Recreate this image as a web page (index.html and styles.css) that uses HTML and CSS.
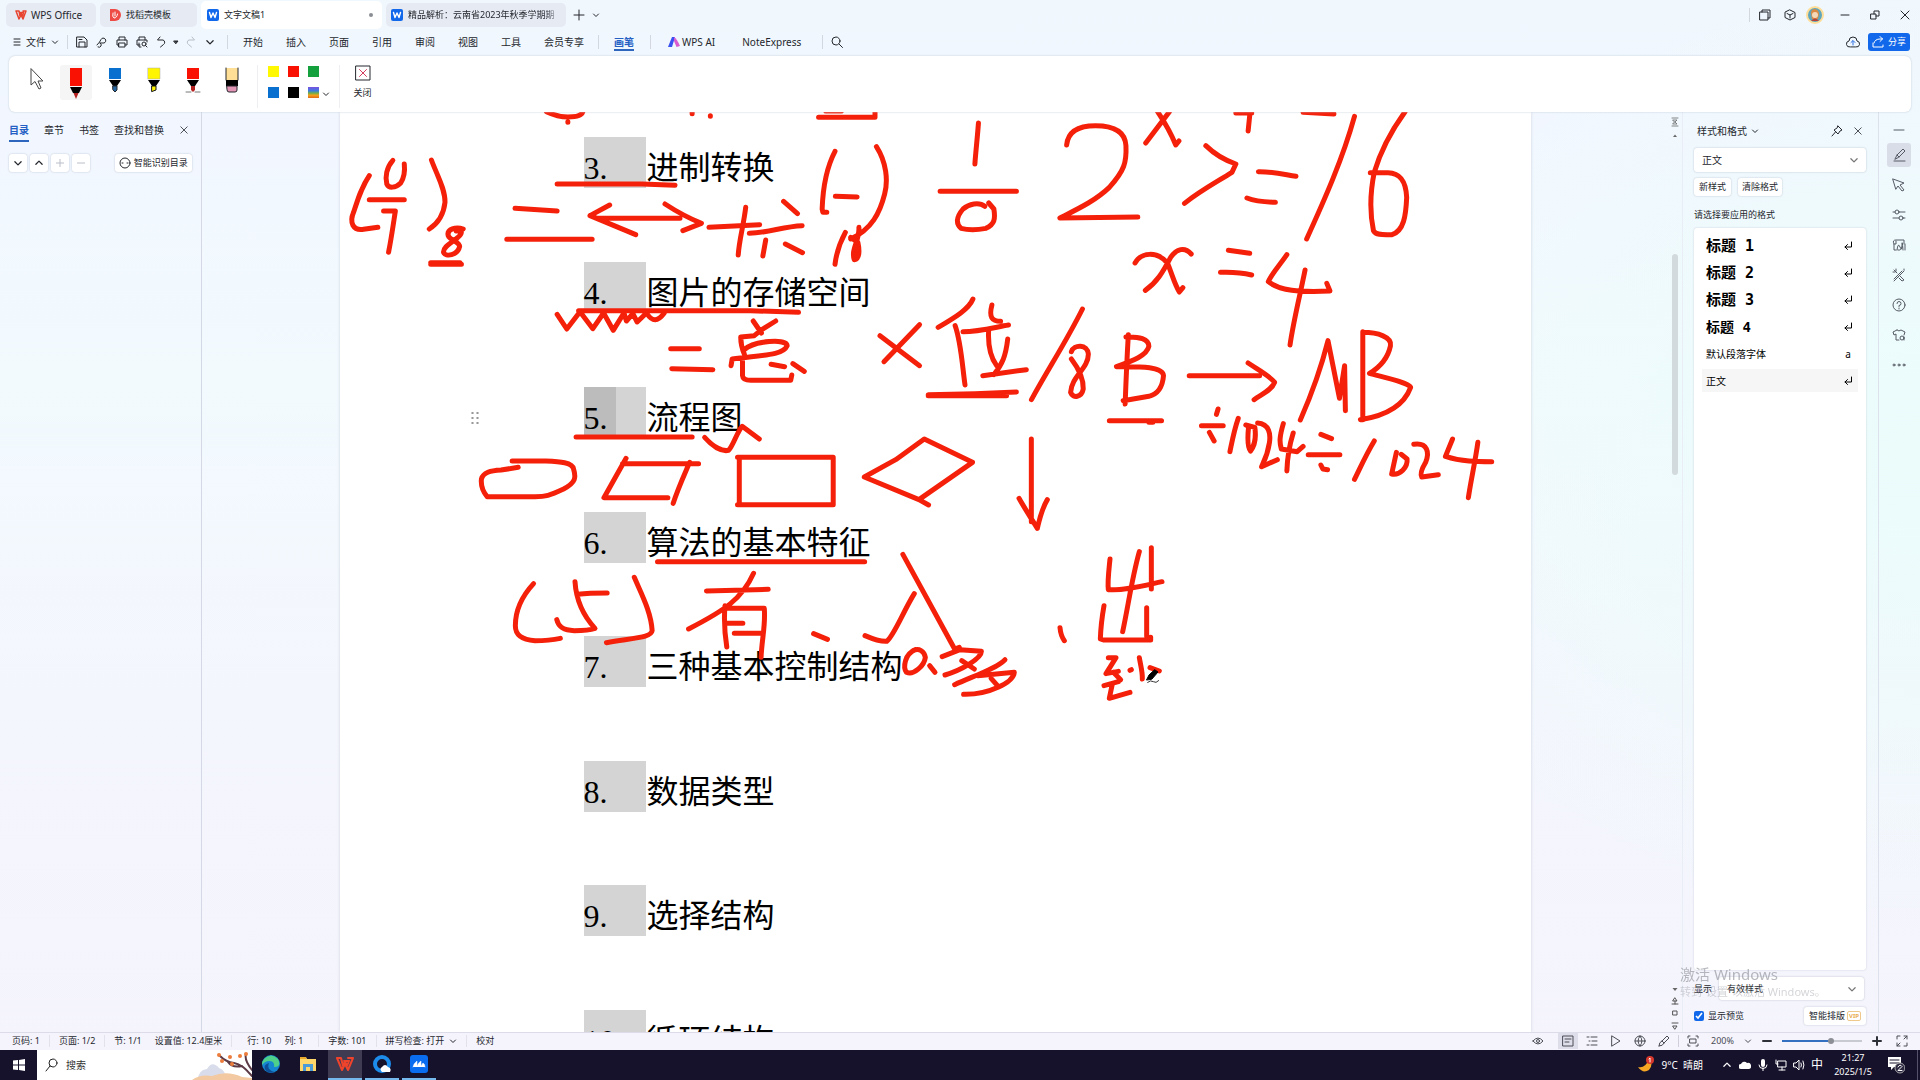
FILE: index.html
```html
<!DOCTYPE html>
<html lang="zh-CN">
<head>
<meta charset="utf-8">
<title>文字文稿1 - WPS Office</title>
<link rel="stylesheet" href="styles.css">
</head>
<body>
<svg class="defs" aria-hidden="true">
  <symbol id="chev" viewBox="0 0 8 8"><path d="M1.500 3 4 5.500 6.500 3"/></symbol>
  <symbol id="close" viewBox="0 0 10 10"><path d="M1 1 9 9M9 1 1 9"/></symbol>
  <symbol id="ret" viewBox="0 0 10 10"><path d="M8.500 1V6H2M4.500 3.500 2 6 4.500 8.500"/></symbol>
</svg>

<header class="titlebar">
  <nav class="tabs">
    <a class="tab home" href="#"><svg class="i12" viewBox="0 0 12 12"><path d="M1 2H4L5 7 6 4 7.500 7 8.500 3.500H5.500M8 2H11L8 10 6 6 4 10 1 2" stroke="#e8432e" stroke-width="1.500"/></svg><span class="t10">WPS Office</span></a>
    <a class="tab docer" href="#"><svg class="i12" viewBox="0 0 12 12"><path d="M1 0H6A6 6 0 0 1 6 12H1Z" fill="#ee4b46" stroke="none"/><path d="M4 4Q3 8 5 9 8 9 8.500 5M6 7V3" stroke="#fff"/></svg>找稻壳模板</a>
    <a class="tab active" href="#"><svg class="i12" viewBox="0 0 12 12"><rect width="12" height="12" rx="2" fill="#1268ea" stroke="none"/><path d="M2.500 3.500 4 8.500 6 4 8 8.500 9.500 3.500" stroke="#fff" stroke-width="1.400"/></svg>文字文稿1<i class="dot"></i></a>
    <a class="tab last" href="#"><svg class="i12" viewBox="0 0 12 12"><rect width="12" height="12" rx="2" fill="#1268ea" stroke="none"/><path d="M2.500 3.500 4 8.500 6 4 8 8.500 9.500 3.500" stroke="#fff" stroke-width="1.400"/></svg><span class="fade">精品解析：云南省2023年秋季学期期</span></a>
    <button class="ib plus" aria-label="新建"><svg class="i12" viewBox="0 0 12 12"><path d="M6 1V11M1 6H11"/></svg></button>
    <button class="ib" aria-label="更多标签"><svg class="i8"><use href="#chev"/></svg></button>
  </nav>
  <div class="wincontrols">
    <i class="sep"></i>
    <button class="ib" aria-label="窗口"><svg class="i12" viewBox="0 0 12 12"><path d="M1 3H9V11H1ZM3 3V1H11V9H9"/></svg></button>
    <button class="ib" aria-label="应用"><svg class="i12" viewBox="0 0 12 12"><path d="M6 1 11 3.500V8.500L6 11 1 8.500V3.500ZM3 4.500 6 6 9 4.500M6 6V9"/></svg></button>
    <button class="ib" aria-label="账号"><svg class="avatar" viewBox="0 0 18 18"><circle cx="9" cy="9" r="8" fill="#5fa6bd" stroke="#ffdf9a" stroke-width="2"/><path d="M5 7Q5 3 9 3 13 4 13 8L12 13H6Z" fill="#d98a45" stroke="none"/><circle cx="9" cy="9" r="3" fill="#f4d8b8" stroke="none"/><path d="M5 15Q9 10 13 15" fill="#b5423c" stroke="none"/></svg></button>
    <button class="ib wide" aria-label="最小化"><svg class="i10" viewBox="0 0 10 10"><path d="M1 5H9"/></svg></button>
    <button class="ib wide" aria-label="还原"><svg class="i10" viewBox="0 0 10 10"><path d="M1 4H6V9H1ZM4 4V1H9V6H6"/></svg></button>
    <button class="ib wide" aria-label="关闭"><svg class="i10"><use href="#close"/></svg></button>
  </div>
</header>

<nav class="menubar">
  <button class="file"><svg class="i8" viewBox="0 0 8 8"><path d="M1 1H7M1 4H7M1 7H7"/></svg>文件<svg class="i8"><use href="#chev"/></svg></button>
  <i class="sep"></i>
  <div class="quick">
    <button class="ib" aria-label="保存"><svg class="i12" viewBox="0 0 12 12"><path d="M1 1H8L11 4V11H1ZM3 11V6H9V11M3 3.500H6"/></svg></button>
    <button class="ib" aria-label="导出"><svg class="i12" viewBox="0 0 12 12"><path d="M1 9Q4 6 5 3.500A2.500 2.500 0 1 1 8 7L4 7M4 7A2 2 0 1 1 2 11"/></svg></button>
    <button class="ib" aria-label="打印"><svg class="i12" viewBox="0 0 12 12"><path d="M3 4V1H9V4M3 9H1V4H11V9H9M3 7H9V11H3Z"/></svg></button>
    <button class="ib" aria-label="打印预览"><svg class="i12" viewBox="0 0 12 12"><path d="M3 4V1H9V4M4 9H1V4H11V6M3 7V11H5M11 11 9.500 9.500"/><circle cx="8" cy="8" r="2"/></svg></button>
    <button class="ib" aria-label="撤销"><svg class="i12" viewBox="0 0 12 12"><path d="M4 1 1.500 4H7A2.500 2.500 0 0 1 7.500 8.500L4.500 11"/></svg></button>
    <button class="ib slim" aria-label="撤销列表"><svg class="i8" viewBox="0 0 8 8"><path d="M2 3H6L4 5.500Z" fill="#333"/></svg></button>
    <button class="ib off" aria-label="恢复"><svg class="i12" viewBox="0 0 12 12"><path d="M8 1 10.500 4H5A2.500 2.500 0 0 0 4.500 8.500L7.500 11"/></svg></button>
    <button class="ib" aria-label="自定义"><svg class="i10"><use href="#chev"/></svg></button>
  </div>
  <i class="sep"></i>
  <div class="menus"><a href="#">开始</a><a href="#">插入</a><a href="#">页面</a><a href="#">引用</a><a href="#">审阅</a><a href="#">视图</a><a href="#">工具</a><a href="#">会员专享</a></div>
  <i class="sep"></i>
  <a class="pen" href="#">画笔</a>
  <i class="sep"></i>
  <a class="ai" href="#"><svg class="i12" viewBox="0 0 12 12"><path d="M4 1H7L4 11H0Z" fill="#3a50f0" stroke="none"/><path d="M6 1Q9 3 12 10L8.500 11 6 5Z" fill="#d85bd0" stroke="none"/></svg>WPS AI</a>
  <a class="note" href="#">NoteExpress</a>
  <i class="sep"></i>
  <button class="ib search" aria-label="搜索"><svg class="i12" viewBox="0 0 12 12"><circle cx="5" cy="5" r="4"/><path d="M8 8 11.500 11.500"/></svg></button>
  <div class="right">
    <button class="ib" aria-label="云同步"><svg class="i14" viewBox="0 0 14 14"><path d="M4 12A3 3 0 0 1 3 6 4 4 0 0 1 11 6 3 3 0 0 1 10 12Z"/><path d="M7 10V6M5 7.500 7 5.500 9 7.500" stroke="#2f6fe0"/></svg></button>
    <button class="share"><svg class="i12" viewBox="0 0 12 12"><path d="M1 7V11H11V9M2 7Q3 3 8 3H10.500M8 .5 10.500 3 8 5.500"/></svg>分享</button>
  </div>
</nav>

<section class="ribbon">
  <div class="group pens">
    <button aria-label="选择"><svg viewBox="0 0 32 34"><path d="M10 3V19L14 15.500 18 23 20 22 17 15H21.500Z" fill="#fff" stroke="#444"/></svg></button>
    <button class="on" aria-label="红色笔"><svg viewBox="0 0 32 34"><path d="M10 2H22V20H10Z" fill="#f91103" stroke="none"/><path d="M10 21H22L19 27H13Z" fill="#000" stroke="none"/><path d="M13.500 27H18.500L16 33Z" fill="#b32020" stroke="none"/></svg></button>
    <button aria-label="蓝色笔"><svg viewBox="0 0 32 34"><path d="M10 2H22V13H10Z" fill="#0a70d0" stroke="none"/><path d="M10 14H22L18 20H14Z" fill="#000" stroke="none"/><path d="M14 20H18V24L16 26 14 24Z" fill="#24639c"/></svg></button>
    <button aria-label="荧光笔"><svg viewBox="0 0 32 34"><path d="M10 2H22V13H10Z" fill="#fff500" stroke="#aaa" stroke-width=".5"/><path d="M10 14H22L18 20H14Z" fill="#000" stroke="none"/><path d="M14 20H18V24L14 25.500Z" fill="#fff500" stroke="#111"/></svg></button>
    <button aria-label="下划线笔"><svg viewBox="0 0 32 34"><path d="M10 2H22V13H10Z" fill="#f91103" stroke="none"/><path d="M10 14H22L18 20H14Z" fill="#000" stroke="none"/><path d="M14 20H18V24L16 26 14 24Z" fill="#b32020" stroke="none"/><path d="M9 26H14M18 26H23" stroke="#777"/></svg></button>
    <button aria-label="橡皮擦"><svg viewBox="0 0 32 34"><path d="M10 2H22V14H10Z" fill="#ffdf95" stroke="none"/><path d="M10 14H22V20H10Z" fill="#000" stroke="none"/><path d="M11 20H21V24Q21 26 19 26H13Q11 26 11 24Z" fill="#e295b5"/><path d="M10 2V14M22 2V14"/></svg></button>
  </div>
  <div class="group colors">
    <div class="swatches">
      <button class="y" aria-label="黄色"></button><button class="r" aria-label="红色"></button><button class="g" aria-label="绿色"></button>
      <button class="b" aria-label="蓝色"></button><button class="k" aria-label="黑色"></button><button class="m" aria-label="更多颜色"></button>
    </div>
    <svg class="i8"><use href="#chev"/></svg>
  </div>
  <button class="shut"><svg class="i16" viewBox="0 0 16 16"><path d="M1 1H15V15H1Z"/><path d="M4.500 4.500 11.500 11.500M11.500 4.500 4.500 11.500" stroke="#d43b5e"/></svg>关闭</button>
</section>

<main>
  <aside class="left">
    <div class="ltabs"><a class="cur" href="#">目录</a><a href="#">章节</a><a href="#">书签</a><a href="#">查找和替换</a><button class="ib" aria-label="关闭"><svg class="i8"><use href="#close"/></svg></button></div>
    <div class="ltools">
      <button aria-label="展开"><svg class="i10"><use href="#chev"/></svg></button>
      <button aria-label="收起"><svg class="i10 flip"><use href="#chev"/></svg></button>
      <button class="off" aria-label="增加"><svg class="i8" viewBox="0 0 8 8"><path d="M4 0V8M0 4H8"/></svg></button>
      <button class="off" aria-label="减少"><svg class="i8" viewBox="0 0 8 8"><path d="M0 4H8"/></svg></button>
      <button class="smart"><svg class="i12" viewBox="0 0 12 12"><circle cx="6" cy="6" r="5"/><path d="M3 6H4M8 6H9"/></svg>智能识别目录</button>
    </div>
  </aside>

  <section class="work">
    <div class="canvas">
      <article class="page">
        <ol class="outline">
          <li><b>3.</b><span>进制转换</span></li>
          <li><b>4.</b><span>图片的存储空间</span></li>
          <li class="here"><b>5.</b><span>流程图</span></li>
          <li><b>6.</b><span>算法的基本特征</span></li>
          <li><b>7.</b><span>三种基本控制结构</span></li>
          <li><b>8.</b><span>数据类型</span></li>
          <li><b>9.</b><span>选择结构</span></li>
          <li><b>10.</b><span>循环结构</span></li>
        </ol>
        <svg class="ink" viewBox="340 113 1191 919" aria-label="手写批注">
          <svg x="340" y="110" width="560" height="340" viewBox="0 0 1568 1020" preserveAspectRatio="none">
            <path d="M578 8Q610 24 638 24 676 24 680 8M638 38V40M986 8V14M1037 20V22M1340 25H1498V8M1360 6H1404"/>
            <path d="M608 225H845L938 229"/>
            <path d="M82 200C60 235 50 270 38 310 26 340 36 366 66 361L106 355M148 154C130 175 126 205 131 225 136 238 155 238 170 222 180 205 182 185 180 165M82 272H180M122 306H155C150 340 145 380 136 430M256 153C270 195 295 240 294 280 290 320 272 345 250 360"/>
            <path d="M345 360C325 352 298 360 303 380 308 395 335 398 335 412 330 440 295 445 290 430 288 412 315 400 330 385 345 372 342 362 325 366M254 461H336M254 466H340"/>
            <path d="M490 298 608 306M467 391H706M700 320 720 328H952M755 288 700 320 828 377M910 285Q960 320 1012 343L960 365"/>
            <path d="M1033 355 1175 347M1136 295C1130 350 1118 390 1115 438M1242 277 1281 314M1146 373C1200 372 1240 352 1294 350M1192 393 1184 441M1247 405 1295 431"/>
            <path d="M1386 127C1360 180 1352 240 1350 300L1352 310H1363M1387 262 1448 264M1502 113C1530 160 1535 215 1525 255 1512 310 1490 360 1430 390M1415 370C1400 400 1390 430 1386 466M1453 355C1455 395 1430 420 1440 452 1455 450 1455 425 1450 400L1430 385"/>
            <path d="M668 605H1150L1284 610M608 616 635 660 672 608 708 659 738 612 765 664 795 612 802 636 820 614 832 639 858 612C875 640 890 638 908 612"/>
            <path d="M926 719H1006M929 779 1044 782M1157 636 1180 672M1220 636 1178 664 1160 680 1122 684C1122 705 1126 720 1132 735M1132 722C1160 695 1250 688 1252 710 1240 740 1180 738 1098 750L1095 770M1127 752V800Q1128 814 1150 814H1262L1265 798M1207 766 1245 773M1268 764 1300 787"/>
          </svg>
          <svg x="880" y="110" width="620" height="420" viewBox="0 0 1568 1260" preserveAspectRatio="none">
            <path d="M249 42C246 90 242 130 240 165M152 247H345M265 292C250 278 225 285 210 300 192 325 192 345 205 358 225 364 250 362 268 358 290 345 292 330 288 300L275 282"/>
            <path d="M472 108C475 70 500 50 545 50 590 50 620 65 622 110 624 160 618 185 580 235 545 275 500 300 455 327L652 324"/>
            <path d="M732 8 672 102M702 8C720 40 735 70 748 108L756 96M900 12H940M936 8 931 66M1070 10 1148 15"/>
            <path d="M824 110C850 140 875 155 900 165L890 190C850 220 810 245 770 283M957 188C990 187 1020 196 1052 202M928 267C950 277 970 279 1000 280"/>
            <path d="M1200 22C1170 150 1125 270 1079 390M1328 8C1290 70 1265 130 1250 190 1238 260 1240 320 1248 365 1255 380 1275 377 1295 377 1325 365 1330 320 1332 265 1330 215 1315 192 1285 191H1240"/>
            <path d="M645 462C660 430 700 425 727 462 740 500 745 525 757 549L766 536M787 435C770 412 750 420 735 445 715 490 700 520 671 544M881 424 935 433M861 490Q905 488 940 498"/>
            <path d="M1029 437C1010 470 990 495 982 518 1010 545 1060 550 1138 546L1130 523M1075 483C1062 560 1045 640 1037 708"/>
            <path d="M0 680 100 770M100 647 10 758"/>
            <path d="M235 570C225 600 190 625 147 655M190 650C205 700 208 770 215 828M283 588C275 625 283 637 305 637M210 668C250 668 290 655 325 648M275 660C272 710 280 745 295 770M323 690C318 740 310 765 288 797M260 800 370 782M122 860H320M122 857 240 854 345 849"/>
            <path d="M512 600C470 700 425 780 383 872M484 728C490 705 525 705 527 735 527 780 485 800 482 850 488 870 510 865 514 840 515 810 500 775 484 750"/>
            <path d="M628 677C625 740 622 820 620 885M622 684C655 682 680 690 680 712 675 740 640 755 598 773 650 773 715 770 717 800 715 830 705 855 680 862L615 875M580 935H712M680 940H690"/>
            <path d="M782 800H960M931 762C960 785 985 800 998 820 990 845 965 855 946 872"/>
            <path d="M1063 933C1090 860 1115 780 1133 695L1162 868 1175 770 1177 905M1221 668V932M1221 670C1260 670 1295 685 1291 710 1285 745 1270 770 1238 793 1275 805 1335 820 1342 835 1325 890 1280 920 1215 932"/>
            <path d="M855 900 851 916M813 950H868M833 970 845 996M906 928C895 965 890 1000 885 1028M925 948 948 955C952 990 945 1015 937 1026 928 1015 930 980 932 955M955 942C985 945 988 975 985 1000 980 1040 970 1060 965 1073L1005 1052M1020 944C1010 985 1010 1000 1015 1020L1055 1028 1070 1012M1045 972C1035 1010 1030 1050 1029 1086"/>
            <path d="M1115 976 1142 989M1083 1037H1163M1115 1068 1120 1080 1132 1082M1250 996C1230 1035 1215 1075 1200 1111M1306 1030 1294 1095C1315 1100 1335 1075 1333 1050L1318 1036M1350 1006C1385 1000 1390 1030 1380 1060 1370 1080 1365 1095 1370 1104L1412 1097M1448 990 1430 1042C1470 1058 1510 1058 1547 1058M1512 1000C1505 1060 1495 1110 1488 1166"/>
          </svg>
          <svg x="460" y="420" width="560" height="320" viewBox="0 0 1568 960" preserveAspectRatio="none">
            <path d="M325 54H650M685 55C710 85 735 98 752 94 765 80 775 40 790 22L838 60"/>
            <path d="M146 126H240C280 128 315 130 318 150 325 175 325 190 290 210 250 230 240 233 210 233H76C62 215 58 200 60 180 65 160 85 155 115 153L163 145"/>
            <path d="M465 118 403 236H582M455 134H668M643 130C625 175 610 210 597 253M777 115H1045V257H777M782 117V254"/>
            <path d="M1312 258 1285 242 1132 174 1220 122 1300 60 1435 130 1285 242"/>
            <path d="M553 428H1133"/>
            <path d="M206 494C175 530 155 570 155 620 155 650 175 662 210 665Q250 665 281 658M322 488C325 540 345 590 378 628 360 635 340 635 320 635 285 634 275 620 271 602M330 526Q360 522 412 522M488 475C510 530 535 580 538 635 535 655 500 655 410 671"/>
            <path d="M690 516 863 511M822 463C790 540 740 575 640 630M742 560C738 610 742 650 747 684M742 568H852C856 620 845 660 843 715M745 613H792M768 643H845M990 644 1029 661"/>
            <path d="M1134 650C1160 662 1180 668 1195 667 1215 650 1240 580 1272 524M1240 406 1385 690 1398 685"/>
            <path d="M1275 692C1245 705 1240 745 1250 760 1270 770 1300 740 1303 715 1300 695 1285 688 1270 694M1315 740 1330 760M1350 713 1400 692 1460 697C1460 720 1400 755 1358 768M1405 725 1440 750M1385 797C1440 770 1500 750 1526 722M1450 770 1552 760C1550 790 1480 828 1410 826M1487 778 1505 800"/>
          </svg>
          <svg x="1000" y="430" width="240" height="300" viewBox="0 0 720 900" preserveAspectRatio="none">
            <path d="M94 30V278M57 208C75 240 95 270 112 298 120 265 125 240 142 212"/>
            <path d="M180 596Q182 620 193 635M330 390C326 430 322 460 325 482 370 486 430 470 486 458M418 368C395 450 385 530 368 608M454 356V480M312 530C305 570 302 600 301 630L310 633H452V625M440 536V622"/>
            <path d="M325 686H348L318 734 355 727M340 730 362 752M312 770 355 758M337 765 328 808 390 790M390 724 394 722M418 686C422 710 428 730 427 750M450 716 478 726"/>
            <path class="nib" d="M440 752 447 738 464 722 474 729 456 750Z"/>
            <path class="wave" d="M443 760Q452 752 460 758T476 755"/>
          </svg>
        </svg>
        <svg class="grip" viewBox="0 0 8 14"><path d="M1 2H2M6 2H7M1 7H2M6 7H7M1 12H2M6 12H7" stroke="#777" stroke-width="1.500"/></svg>
      </article>
    </div>
    <div class="scroll">
      <svg viewBox="0 0 10 24"><path d="M2 2H8M2 10H8M3 4H7L5 6ZM3 8H7L5 6Z" stroke="#666" stroke-width=".8"/><path d="M3 21H7L5 18.500Z" fill="#666" stroke="none"/></svg>
      <i class="thumb"></i>
      <svg class="down" viewBox="0 0 10 48"><path d="M2.500 4H7.500L5 7Z" fill="#666" stroke="none"/><path d="M5 14 7 17H3ZM2 20H8M5 17V20M3 27H7V31H3ZM2 39H8M3 42H7L5 45Z" stroke="#555"/></svg>
    </div>
  </section>

  <aside class="styles">
    <div class="shead">样式和格式<svg class="i8"><use href="#chev"/></svg><button class="ib push" aria-label="固定"><svg class="i12" viewBox="0 0 12 12"><path d="M7 1 11 5 9 6 7 9 3 5 6 3ZM4.500 7 1 11"/></svg></button><button class="ib" aria-label="关闭"><svg class="i8"><use href="#close"/></svg></button></div>
    <div class="sel big"><select aria-label="当前样式"><option>正文</option></select><svg class="i10"><use href="#chev"/></svg></div>
    <div class="sbtns"><button>新样式</button><button>清除格式</button></div>
    <p class="hint">请选择要应用的格式</p>
    <ul class="list">
      <li class="h1">标题 1<svg class="i10"><use href="#ret"/></svg></li>
      <li class="h2">标题 2<svg class="i10"><use href="#ret"/></svg></li>
      <li class="h3">标题 3<svg class="i10"><use href="#ret"/></svg></li>
      <li class="h4">标题 4<svg class="i10"><use href="#ret"/></svg></li>
      <li>默认段落字体<u>a</u></li>
      <li class="picked">正文<svg class="i10"><use href="#ret"/></svg></li>
    </ul>
    <div class="show"><label for="show">显示</label><div class="sel"><select id="show"><option>有效样式</option></select><svg class="i10"><use href="#chev"/></svg></div></div>
    <div class="foot"><label><input type="checkbox" checked>显示预览</label><button>智能排版<em>VIP</em></button></div>
    <div class="mark"><p>激活 Windows</p><p class="small">转到“设置”以激活 Windows。</p></div>
  </aside>

  <nav class="rail">
    <button class="min" aria-label="收起"><svg class="i14" viewBox="0 0 14 14"><path d="M2 7H12"/></svg></button>
    <button class="on" aria-label="样式"><svg class="i14" viewBox="0 0 14 14"><path d="M2 13H13M3 11 5 7 11 1 13 3 7 9ZM5 7 7 9"/></svg></button>
    <button aria-label="选择"><svg class="i14" viewBox="0 0 14 14"><path d="M1 1 12 5 8 7 12 12 10 13 6 8 4 11Z"/></svg></button>
    <button aria-label="属性"><svg class="i14" viewBox="0 0 14 14"><circle cx="5" cy="4" r="2"/><circle cx="9" cy="10" r="2"/><path d="M1 4H3M7 4H13M1 10H7M11 10H13"/></svg></button>
    <button aria-label="图片"><svg class="i14" viewBox="0 0 14 14"><path d="M4 12H2V6Q0 2 4 2H12V6M2 6H4V3M5 12Q6 4 8 9T10 7 11 12M13 6V12M6 12Q9 13 10 9"/></svg></button>
    <button aria-label="工具"><svg class="i14" viewBox="0 0 14 14"><path d="M2 13 12 3M2 11 10 3M8 8 12 12 10 13 7 10M2 2 5 5M4 1V3M1 4H3M12 1V2"/></svg></button>
    <button aria-label="帮助"><svg class="i14" viewBox="0 0 14 14"><circle cx="7" cy="7" r="6"/><path d="M5 5.500A2 2 0 1 1 7 7.500V8.500M7 10V11"/></svg></button>
    <button aria-label="皮肤"><svg class="i14" viewBox="0 0 14 14"><path d="M5 2 1 4 2 7 4 6V12H7M5 2Q7 4 9 2L13 4 12 7M12 12V9"/><circle cx="10" cy="10" r="2"/></svg></button>
    <button aria-label="更多"><svg class="i14" viewBox="0 0 14 14"><circle cx="2" cy="7" r="1"/><circle cx="7" cy="7" r="1"/><circle cx="12" cy="7" r="1"/></svg></button>
  </nav>
</main>

<footer class="status">
  <span>页码: 1</span><i class="sep"></i><span>页面: 1/2</span><i class="sep"></i><span>节: 1/1</span><span class="near">设置值: 12.4厘米</span><i class="sep"></i><span class="row">行: 10</span><span class="near col">列: 1</span><i class="sep"></i><span>字数: 101</span><i class="sep"></i><span>拼写检查: 打开</span><svg class="i8 gap"><use href="#chev"/></svg><i class="sep"></i><span>校对</span>
  <div class="views">
    <button class="ib" aria-label="护眼"><svg class="i12" viewBox="0 0 12 12"><path d="M1 6Q6 0 11 6 6 12 1 6Z"/><circle cx="6" cy="6" r="1.500"/></svg></button>
    <button class="ib on" aria-label="页面视图"><svg class="i12" viewBox="0 0 12 12"><path d="M1 1H11V11H1ZM3 4H9M3 7H7"/></svg></button>
    <button class="ib" aria-label="大纲"><svg class="i12" viewBox="0 0 12 12"><path d="M1 2H3M5 2H11M3 6H4M6 6H11M1 10H3M5 10H11"/></svg></button>
    <button class="ib" aria-label="阅读"><svg class="i12" viewBox="0 0 12 12"><path d="M2 1 10 6 2 11Z"/></svg></button>
    <button class="ib" aria-label="Web视图"><svg class="i12" viewBox="0 0 12 12"><circle cx="6" cy="6" r="5"/><path d="M1 6H11M6 1Q2 6 6 11M6 1Q10 6 6 11"/></svg></button>
    <button class="ib" aria-label="写作"><svg class="i12" viewBox="0 0 12 12"><path d="M1 11Q1 7 4 6L9 1 11 3 6 8Q5 11 1 11M4 6 6 8"/></svg></button>
    <i class="sep none"></i>
    <button class="ib fit" aria-label="适合页面"><svg class="i12" viewBox="0 0 12 12"><path d="M1 3V1H3M9 1H11V3M11 9V11H9M3 11H1V9M3 4H9V8H3Z"/></svg></button>
    <span class="pct">200%</span><svg class="i8"><use href="#chev"/></svg>
    <button class="ib bold" aria-label="缩小"><svg class="i10" viewBox="0 0 10 10"><path d="M1 5H9"/></svg></button>
    <input type="range" min="0" max="100" value="62" aria-label="缩放">
    <button class="ib bold" aria-label="放大"><svg class="i10" viewBox="0 0 10 10"><path d="M1 5H9M5 1V9"/></svg></button>
    <button class="ib" aria-label="全屏"><svg class="i12" viewBox="0 0 12 12"><path d="M1 4V1H4M8 1H11V4M11 8V11H8M4 11H1V8M8 4 11 1M1 11 4 8"/></svg></button>
  </div>
</footer>

<div class="taskbar">
  <button class="start" aria-label="开始"><svg class="i12" viewBox="0 0 12 12"><path d="M0 1.500 5 1V5.500H0ZM6 1 12 0V5.500H6ZM0 6.500H5V11L0 10.500ZM6 6.500H12V12L6 11Z" fill="#fff" stroke="none"/></svg></button>
  <label class="find"><svg class="i14" viewBox="0 0 14 14"><circle cx="8" cy="5" r="4"/><path d="M5 8 1 13"/></svg><input type="text" placeholder="搜索" aria-label="搜索">
    <svg class="art" viewBox="0 0 60 30"><path d="M6 30Q6 20 15 19 20 10 27 18 34 20 34 30Z" fill="#d9dcea" stroke="none"/><path d="M0 30Q8 24 20 26 35 20 50 27L60 28V30Z" fill="#f2c9a0" stroke="none"/><path d="M60 26Q50 14 42 13T28 6M60 20Q52 10 54 4M50 16Q40 18 36 12" stroke="#5c3b46" stroke-width="2"/><g fill="#ec7c3c" stroke="none"><circle cx="27" cy="5" r="2"/><circle cx="30" cy="11" r="2"/><circle cx="38" cy="7" r="2"/><circle cx="48" cy="6" r="2"/><circle cx="54" cy="4" r="2"/><circle cx="40" cy="14" r="2"/></g></svg>
  </label>
  <div class="apps">
    <button aria-label="Edge"><svg class="i18" viewBox="0 0 18 18"><circle cx="9" cy="9" r="9" fill="#1687d0" stroke="none"/><path d="M2 4Q9 -3 16 4 20 12 12 12 13 6 7 6 3 6 0 10 0 6 2 4" fill="#4fd08a" stroke="none"/><path d="M7 8Q4 15 13 17 8 19 4 16 0 10 7 8" fill="#0d4f96" stroke="none"/></svg></button>
    <button aria-label="资源管理器"><svg class="i18" viewBox="0 0 18 18"><path d="M1 2H7L8 4H17V16H1Z" fill="#ffd76a" stroke="none"/><path d="M1 2H7V4H1Z" fill="#e9a92c" stroke="none"/><path d="M4 9H14V16H11V12H7V16H4Z" fill="#4a9bd8" stroke="none"/></svg></button>
    <button class="cur" aria-label="WPS"><svg class="i18" viewBox="0 0 18 18"><path d="M1 3H5L7 11 9 6 11 11 13 6H8M12 3H17L12 15 9 9 6 15 1 3" stroke="#f0432c" stroke-width="2"/></svg></button>
    <button class="run" aria-label="QQ浏览器"><svg class="i18" viewBox="0 0 18 18"><circle cx="9" cy="9" r="7" stroke="#1c8bea" stroke-width="4" fill="#17122c"/><path d="M9 17Q6 14 9 12 12 8 15 12 19 13 17 17Z" fill="#fff" stroke="none"/></svg></button>
    <button class="run" aria-label="腾讯会议"><svg class="i18" viewBox="0 0 18 18"><rect width="18" height="18" rx="3" fill="#0a6df0" stroke="none"/><path d="M3 12Q4 8 7 6V11Q8 8 11 6V11L13 8Q15 9 15 12" fill="#fff" stroke="#fff" stroke-width=".5"/></svg></button>
  </div>
  <div class="tray">
    <svg class="i18" viewBox="0 0 18 18"><path d="M12 3Q17 8 12 14 6 18 1 11 8 13 12 3" fill="#f5a623" stroke="none"/><circle cx="13" cy="4" r="4" fill="#d8382c" stroke="none"/><path d="M12 3 13 2V6" stroke="#fff"/></svg>
    <span class="temp">9°C&nbsp; 晴朗</span>
    <svg class="i10 flip2"><use href="#chev"/></svg>
    <svg class="i12" viewBox="0 0 12 12"><path d="M2 10A2.500 2.500 0 0 1 2 5 3.500 3.500 0 0 1 8 4 3 3 0 0 1 10 10Z" fill="#fff" stroke="none"/></svg>
    <svg class="i12" viewBox="0 0 12 12"><rect x="4" y="0" width="4" height="8" rx="2" fill="#fff" stroke="none"/><path d="M2 6Q2 9.500 6 9.500T10 6M6 9V12"/></svg>
    <svg class="i12" viewBox="0 0 12 12"><path d="M3 2H11V8H3ZM7 8V11M4 11H10M1 1V5H3"/></svg>
    <svg class="i12" viewBox="0 0 12 12"><path d="M1 4H3L6 1V11L3 8H1ZM8 4Q9 6 8 8M10 2Q12 6 10 10"/></svg>
    <span class="ime">中</span>
    <div class="clock"><span>21:27</span><span>2025/1/5</span></div>
    <svg class="i18" viewBox="0 0 18 18"><path d="M1 1H14V11H7L4 14V11H1Z" fill="#fff" stroke="none"/><path d="M3 4H12M3 7H12" stroke="#17122c"/><circle cx="13" cy="12" r="5" fill="#2b2840" stroke="#aaa"/><path d="M11 11Q13 7.500 15 10.500L11 14.500H15" stroke="#fff"/></svg>
    <i class="edge"></i>
  </div>
</div>
</body>
</html>
```

FILE: styles.css
```css
* { box-sizing: border-box; }
body {
  margin: 0;
  height: 100vh;
  display: flex;
  flex-direction: column;
  overflow: hidden;
  font: 9px/12px "Noto Sans", "Noto Sans CJK SC", sans-serif;
  color: #24272d;
  background:
    radial-gradient(ellipse 30% 45% at 100% 42%, #ebfcfb, transparent),
    linear-gradient(180deg, #f0f7fd 0, #f2f7ff 12%, #f2fafe 35%, #f4f6fd 65%, #f5f4fc 100%);
}
a { color: inherit; text-decoration: none; }
p, ul, ol { margin: 0; padding: 0; list-style: none; }
button, input, select { font: inherit; color: inherit; margin: 0; }
button { padding: 0; border: 0; background: none; display: flex; align-items: center; justify-content: center; }
svg { display: block; flex: none; fill: none; stroke: currentColor; stroke-linecap: round; stroke-linejoin: round; }
.defs { position: absolute; width: 0; height: 0; }
.i8 { width: 8px; height: 8px; }
.i10 { width: 10px; height: 10px; }
.i12 { width: 12px; height: 12px; }
.i14 { width: 14px; height: 14px; }
.i16 { width: 16px; height: 16px; }
.i18 { width: 18px; height: 18px; }
.sep { width: 1px; height: 14px; background: #d3d8e0; flex: none; }
.ib { width: 20px; height: 20px; flex: none; }

/* title bar */
.titlebar { height: 30px; display: flex; justify-content: space-between; align-items: center; padding: 0 3px 0 6px; }
.tabs { display: flex; align-items: center; gap: 4px; }
.tab { display: flex; align-items: center; gap: 5px; height: 24px; padding: 0 9px; border-radius: 5px; background: #e6eaf3; }
.t10 { font-size: 10px; }
.home { width: 90px; gap: 4px; }
.docer { width: 97px; }
.active { width: 181px; background: #fff; padding-left: 6px; height: 28px; }
.last { width: 180px; padding: 0 5px; }
.fade { flex: 1; white-space: nowrap; -webkit-mask-image: linear-gradient(90deg, #000 90%, transparent); mask-image: linear-gradient(90deg, #000 90%, transparent); }
.dot { width: 4px; height: 4px; border-radius: 2px; background: #8a8d93; margin-left: auto; }
.plus { width: 18px; }
.tabs > .ib + .ib { width: 8px; }
.wincontrols { display: flex; align-items: center; gap: 5px; }
.wide { width: 25px; }
.wincontrols .ib:nth-child(4) { margin-right: 2px; }
.avatar { width: 18px; height: 18px; }

/* menu bar */
.menubar { height: 26px; display: flex; align-items: center; padding: 0 10px 2px 13px; font-size: 10px; line-height: 14px; }
.file { gap: 5px; margin-right: 8px; }
.quick { display: flex; align-items: center; margin: 0 7px 0 4px; }
.slim { width: 8px; }
.off { color: #b9bec7; }
.menus { display: flex; gap: 23px; margin: 0 14px 0 15px; }
.pen { color: #2460c4; font-weight: 700; margin: 2px 16px 0 15px; border-bottom: 2px solid #2f66bd; }
.ai { display: flex; gap: 2px; margin: 0 27px 0 17px; align-items: center; }
.note { margin-right: 21px; }
.search { margin-left: 4px; }
.right { margin-left: auto; display: flex; align-items: center; gap: 5px; }
.share { width: 42px; height: 18px; border-radius: 3px; background: #1268ea; color: #fff; font-size: 9px; gap: 4px; }

/* ribbon */
.ribbon { height: 56px; margin: 0 9px; background: #fff; border-radius: 6px; display: flex; padding-top: 9px; box-shadow: 0 0 2px #bcc4d0; position: relative; z-index: 2; }
.group { border-right: 1px solid #edeff2; height: 43px; }
.pens { display: flex; padding-left: 12px; width: 249px; gap: 7px; }
.pens button { width: 32px; height: 35px; border-radius: 3px; }
.pens svg { width: 32px; height: 34px; }
.pens .on { background: #f5f5f5; }
.pens svg path { stroke-linejoin: miter; }
.colors { width: 82px; display: flex; align-items: flex-end; gap: 3px; padding: 0 0 10px 10px; }
.swatches { display: grid; grid-template-columns: repeat(3, 11px); gap: 10px 9px; }
.swatches button { height: 11px; }
.y { background: #fff800; } .r { background: #f91103; } .g { background: #14a03c; } .b { background: #0a70d0; } .k { background: #000; }
.m { background: linear-gradient(#7a50e0, #3b7de0 35%, #6ab04c 55%, #f6a21a 75%, #e06a1a); }
.shut { flex-direction: column; gap: 6px; margin-left: 13px; width: 19px; align-self: flex-start; }

/* body */
main { flex: 1; min-height: 0; display: grid; grid-template-columns: 202px minmax(0, 1fr) 196px 42px; grid-template-rows: minmax(0, 1fr); }
.left { border-right: 1px solid #d5d9e6; padding: 10px 9px 0; }
.ltabs { display: flex; gap: 15px; font-size: 10px; line-height: 16px; align-items: flex-start; white-space: nowrap; }
.ltabs .cur { color: #2460c4; font-weight: 700; border-bottom: 2px solid #2f66bd; height: 20px; }
.ltabs .ib { width: 10px; height: 16px; }
.ltools { display: flex; gap: 3px; margin-top: 12px; }
.ltools button, .sbtns button, .foot button { height: 18px; background: #fff; border-radius: 3px; box-shadow: 0 0 2px #b8bfcc; }
.ltools button { width: 18px; }
.ltools .smart { width: 78px; margin-left: 22px; gap: 3px; }
.flip { transform: rotate(180deg); }

.work { display: flex; min-width: 0; }
.canvas { flex: 1; display: flex; justify-content: center; overflow: hidden; }
.page { width: 1191px; flex: none; background: #fff; position: relative; overflow: hidden; box-shadow: 0 0 3px #ccd2de; }
.outline { padding: 25px 0 0 244px; font-size: 32px; line-height: 51px; color: #000; font-family: "Liberation Serif", "Noto Sans CJK SC", serif; }
.outline li { display: flex; height: 51px; margin-bottom: 74px; }
.outline li:nth-child(4), .outline li:nth-child(6) { margin-bottom: 73px; }
.outline b { width: 62px; margin-right: 1px; background: #d4d4d4; font-weight: 400; padding-top: 6px; }
.outline span { padding-top: 6px; }
.outline .here b { background: linear-gradient(90deg, #bcbcbc 32px, #d4d4d4 32px); }
.ink { position: absolute; left: 0; top: 0; width: 1191px; height: 919px; color: #f5200a; stroke-width: 5px; }
.ink path { vector-effect: non-scaling-stroke; }
.ink svg { overflow: visible; }
.ink .nib { fill: #000; stroke: #000; stroke-width: 1px; }
.ink .wave { stroke: #333; stroke-width: 1px; }
.grip { position: absolute; left: 131px; top: 299px; width: 8px; height: 14px; }
.scroll { width: 14px; display: flex; flex-direction: column; align-items: center; padding-top: 4px; }
.scroll svg { width: 10px; height: 24px; }
.thumb { width: 6px; height: 221px; margin-top: 114px; border-radius: 3px; background: #d3dade; }
.scroll .down { height: 48px; margin-top: auto; }

.styles { padding: 11px 12px 7px 11px; display: flex; flex-direction: column; border-left: 1px solid #e9edf5; position: relative; }
.shead { display: flex; align-items: center; font-size: 10px; height: 16px; padding-left: 3px; gap: 4px; }
.shead .ib { width: 17px; height: 16px; }
.push { margin-left: auto; }
.sel { position: relative; background: #fff; border-radius: 3px; box-shadow: 0 0 2px #b5bcc8; height: 23px; }
.sel select { appearance: none; width: 100%; height: 100%; border: 0; background: none; padding: 0 8px; }
.sel svg { position: absolute; right: 7px; top: 7px; color: #777; }
.big { margin-top: 9px; height: 24px; font-size: 10px; }
.sbtns { display: flex; gap: 7px; margin-top: 6px; }
.sbtns button { width: 37px; }
.sbtns button + button { width: 44px; }
.hint { margin: 13px 0 7px; }
.list { flex: 1; background: #fff; border-radius: 3px; box-shadow: 0 0 2px #c4cad4; padding: 6px 8px; }
.list li { height: 23px; margin-bottom: 4px; padding: 0 5px 0 4px; display: flex; align-items: center; justify-content: space-between; font-size: 10px; color: #000; }
.list .h1, .list .h2, .list .h3, .list .h4 { font-family: "DejaVu Sans Mono", "Noto Sans CJK SC", monospace; font-weight: 700; font-size: 15px; }
.list .h4 { font-size: 14px; }
.list .picked { background: #f6f6f7; }
.list u { text-decoration: none; width: 10px; text-align: center; }
.show { display: flex; align-items: center; justify-content: space-between; margin-top: 7px; padding-right: 2px; }
.show .sel { width: 145px; }
.foot { display: flex; align-items: center; justify-content: space-between; margin-top: 7px; }
.foot label { display: flex; align-items: center; gap: 4px; }
.foot input { width: 10px; height: 10px; accent-color: #1268ea; }
.foot button { width: 62px; gap: 2px; }
.foot em { font: 700 6px/8px "Noto Sans", sans-serif; color: #e8ab4e; border: 1px solid #efc88c; border-radius: 2px; padding: 0 1px; }
.mark { position: absolute; left: -3px; bottom: 32px; color: #888b94; opacity: .6; font-size: 15px; line-height: 20px; white-space: nowrap; pointer-events: none; }
.mark .small { font-size: 11px; line-height: 16px; opacity: .6; }

.rail { border-left: 1px solid #dde1eb; display: flex; flex-direction: column; align-items: center; gap: 6px; padding: 11px 1px 0 0; color: #555a64; }
.rail button { width: 24px; height: 24px; border-radius: 3px; }
.rail .min { height: 14px; }
.rail .on { background: #d9dde7; }

/* status bar */
.status { height: 18px; display: flex; align-items: center; padding: 0 8px 1px 12px; background: #f5f4fc; border-top: 1px solid #dcdce8; position: relative; z-index: 2; white-space: nowrap; }
.status .sep { margin: 0 9px; height: 12px; background: #e2e2ec; }
.near { margin-left: 13px; }
.row { margin-left: 6px; }
.col { margin-right: 6px; }
.gap { margin-left: 5px; }
.views { margin-left: auto; display: flex; align-items: center; gap: 4px; color: #4a4d55; }
.views .ib { height: 16px; }
.views .on { background: #dedeea; }
.views .ib:first-child { margin-right: 6px; }
.status .none { margin: 0; background: #d0d0dc; }
.fit { margin-right: 4px; }
.pct { margin-right: 6px; }
.views .bold { width: 22px; color: #2d3036; }
.bold svg { stroke-width: 2; }
.views input { appearance: none; width: 80px; height: 10px; background: linear-gradient(90deg, #3470c0 48px, #c8cad2 48px) center / 100% 2px no-repeat; }
.views input::-webkit-slider-thumb { appearance: none; width: 6px; height: 6px; border-radius: 3px; background: #8d8f96; }

/* taskbar */
.taskbar { height: 30px; background: #17122c; display: flex; color: #fff; }
.start { width: 37px; }
.find { width: 215px; background: #fff; color: #222; display: flex; align-items: center; padding-left: 8px; gap: 7px; font-size: 10px; }
.find input { flex: 1; min-width: 0; border: 0; padding: 0; background: none; }
.find input::placeholder { color: #333; }
.art { width: 60px; height: 30px; }
.apps { display: flex; gap: 3px; padding-left: 2px; }
.apps button { width: 34px; border-bottom: 2px solid transparent; }
.apps .cur { background: #3f3b52; border-color: #76b9ed; }
.apps .run { border-color: #76b9ed; }
.tray { margin-left: auto; display: flex; align-items: center; gap: 6px; }
.temp { font-size: 10px; margin-right: 13px; }
.flip2 { transform: rotate(180deg); margin-right: 1px; }
.ime { font-size: 12px; }
.clock { width: 46px; display: flex; flex-direction: column; align-items: center; line-height: 14px; margin: 0 5px 0 1px; }
.edge { width: 1px; height: 30px; background: #55516a; margin: 0 2px 0 6px; }
```
